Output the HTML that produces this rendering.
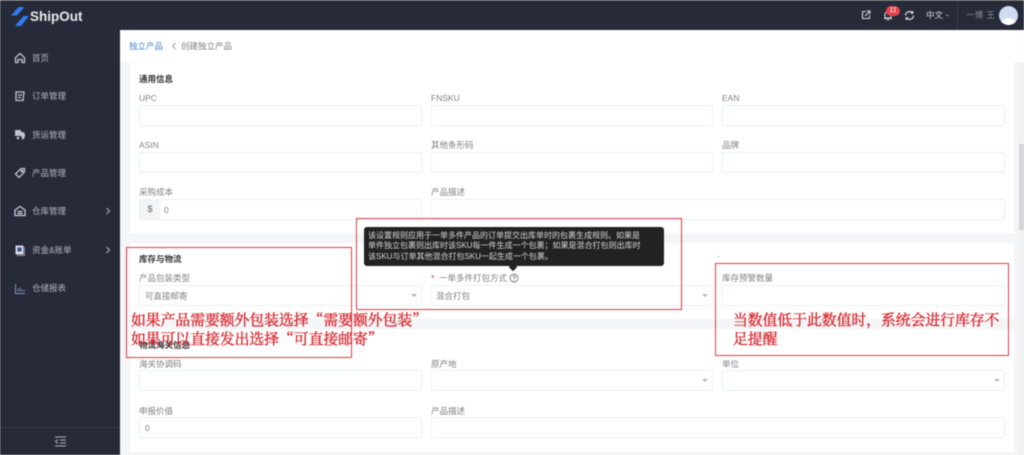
<!DOCTYPE html>
<html lang="zh"><head><meta charset="utf-8">
<style>
html,body{margin:0;padding:0}
body{width:1024px;height:455px;overflow:hidden;position:relative;background:#f4f5f6;font-family:"Liberation Sans","Noto Sans CJK SC",sans-serif;color:#777}
#w{position:absolute;left:0;top:0;width:1024px;height:455px;overflow:hidden;filter:blur(.45px)}
.a{position:absolute}
.t{position:absolute;white-space:nowrap;line-height:12px;font-size:8.5px;color:#808080}
.h{position:absolute;white-space:nowrap;line-height:12px;font-size:8.5px;color:#333;font-weight:700}
.i{position:absolute;background:#fff;border:1px solid #eceef0;border-radius:2px;box-sizing:border-box;height:21px}
.c{position:absolute;width:0;height:0;border-left:3px solid transparent;border-right:3px solid transparent;border-top:3px solid #b5b5b5}
.m{position:absolute;left:32px;white-space:nowrap;font-size:8.5px;line-height:12px;color:#b4b7bf}
.r{position:absolute;border:1.3px solid #dd3c44;box-sizing:border-box}
.n{position:absolute;font-family:"Noto Serif CJK SC","Liberation Serif",serif;color:#d7232b;-webkit-text-stroke:.35px #d7232b;font-size:14.8px;line-height:19px;white-space:nowrap}
svg{position:absolute;overflow:visible}
</style></head><body><div id="w">
<div class="a" style="left:120px;top:30px;width:904px;height:32px;background:#fff"></div>
<div class="a" style="left:130px;top:62px;width:884px;height:171px;background:#fff"></div>
<div class="a" style="left:130px;top:243px;width:884px;height:76px;background:#fff"></div>
<div class="a" style="left:130px;top:329px;width:884px;height:123px;background:#fff"></div>
<div class="a" style="left:1019px;top:62px;width:5px;height:393px;background:#f1f1f1"></div>
<div class="a" style="left:1019px;top:144px;width:5px;height:86px;background:#d5d5d5"></div>

<div class="a" style="left:0;top:0;width:1024px;height:30px;background:#272a38"></div>
<div class="a" style="left:0;top:0;width:1024px;height:1px;background:#555"></div>
<div class="a" style="left:0;top:30px;width:120px;height:425px;background:#272a38"></div>
<div class="a" style="left:0;top:427px;width:120px;height:1px;background:#3a3d4b"></div>

<svg style="left:10px;top:6px" width="20" height="22" viewBox="0 0 20 22"><path d="M8.500 1h6L7 9.500H1z M13.500 10H19l-8 10H5z" fill="#2f7cf0"/></svg>
<div class="a" style="left:30px;top:9px;font-size:13.500px;line-height:16px;font-weight:700;color:#e8e9ec;white-space:nowrap">ShipOut</div>

<svg style="left:14px;top:52px" width="12" height="12" viewBox="0 0 12 12" fill="none" stroke="#bcc3d2" stroke-width="1.300"><path d="M1.500 5.500 6 1.500l4.500 4v5H8V7.500H4v3H1.500z"/></svg>
<svg style="left:14px;top:90px" width="12" height="12" viewBox="0 0 12 12" fill="none" stroke="#bcc3d2" stroke-width="1.300"><path d="M2 2h8l-1 8.500H2zM4 5h4M4 7.500h3"/></svg>
<svg style="left:14px;top:128px" width="12" height="12" viewBox="0 0 12 12"><path d="M1 2h6v6H1zM7 4h2.500L11 6v3H7z" fill="#bcc3d2"/><circle cx="4" cy="10" r="1.300" fill="#bcc3d2"/><circle cx="9" cy="10" r="1.300" fill="#bcc3d2"/></svg>
<svg style="left:14px;top:167px" width="12" height="12" viewBox="0 0 12 12" fill="none" stroke="#bcc3d2" stroke-width="1.300"><path d="M1.500 7 7 1.500h3.500V5L5 10.500z"/><circle cx="8" cy="4" r=".8"/></svg>
<svg style="left:14px;top:205px" width="12" height="12" viewBox="0 0 12 12" fill="none" stroke="#c4cbe0" stroke-width="1.300"><path d="M1 5 6 1.500 11 5v5.500H1zM3.500 6.500h5M3.500 8.500h5"/></svg>
<svg style="left:14px;top:244px" width="12" height="12" viewBox="0 0 12 12"><path d="M1.500 1.500h8v9h-8z" fill="#d5d8e0"/><path d="M3.500 3.500h4v4h-4z" fill="#34508c"/><path d="M10.500 3v8.500H3" fill="none" stroke="#8b8e99"/></svg>
<svg style="left:14px;top:283px" width="12" height="12" viewBox="0 0 12 12" fill="none" stroke="#7f94c4" stroke-width="1"><path d="M1.500 1v9.500H11M4 8.500V6M6 8.500V4.500M8 8.500V6.500M10 8.500V7"/></svg>

<div class="m" style="top:52px">首页</div>
<div class="m" style="top:90px">订单管理</div>
<div class="m" style="top:129px">货运管理</div>
<div class="m" style="top:167px">产品管理</div>
<div class="m" style="top:205px">仓库管理</div>
<div class="m" style="top:244px">资金&amp;账单</div>
<div class="m" style="top:282px">仓储报表</div>
<svg style="left:105px;top:207px" width="6" height="8" viewBox="0 0 6 8" fill="none" stroke="#aab" stroke-width="1.100"><path d="M1.500 1l3 3-3 3"/></svg>
<svg style="left:105px;top:246px" width="6" height="8" viewBox="0 0 6 8" fill="none" stroke="#aab" stroke-width="1.100"><path d="M1.500 1l3 3-3 3"/></svg>
<svg style="left:54px;top:436px" width="12" height="11" viewBox="0 0 12 11" fill="none" stroke="#aeb1ba" stroke-width="1"><path d="M1 1h11M6 4h6M6 7h6M1 10h11M4 3.500 1.500 5.500 4 7.500"/></svg>

<svg style="left:861px;top:10px" width="10" height="10" viewBox="0 0 10 10" fill="none" stroke="#d8d9de" stroke-width="1.100"><path d="M5 1.500H1.500v7h7V5M4 6l4.500-4.500M6 1h3v3"/></svg>
<svg style="left:883px;top:10px" width="10" height="11" viewBox="0 0 10 11" fill="none" stroke="#d8d9de" stroke-width="1.100"><path d="M2 8V4.500a3 3 0 0 1 6 0V8zM1 8.500h8M4 10h2"/></svg>
<div class="a" style="left:886px;top:6px;width:14px;height:10px;border-radius:5px;background:#e5444b;color:#fff;font-size:7px;line-height:10px;text-align:center">11</div>
<svg style="left:904px;top:10px" width="11" height="11" viewBox="0 0 11 11" fill="none" stroke="#d8d9de" stroke-width="1.200"><path d="M1.500 5.500a4 4 0 0 1 7-2.600M9.500 5.500a4 4 0 0 1-7 2.600M8.800 1v2.200H6.600M2.200 10V7.800h2.200"/></svg>
<div class="a" style="left:926px;top:9px;font-size:8.500px;line-height:12px;color:#d8d9de;white-space:nowrap">中文</div>
<div class="a" style="left:946px;top:15px;width:3px;height:1px;background:#888"></div>
<div class="a" style="left:957px;top:0;width:1px;height:30px;background:#3a3d4b"></div>
<div class="a" style="left:966px;top:9px;font-size:8.500px;line-height:12px;color:#8d909b;white-space:nowrap;letter-spacing:.3px">一博 王</div>
<div class="a" style="left:999px;top:6px;width:19px;height:19px;border-radius:50%;background:#cfdcf3;overflow:hidden"><div class="a" style="left:2px;top:12px;width:15px;height:12px;border-radius:50%;background:#fff"></div></div>

<div class="a" style="left:129px;top:40px;font-size:8.500px;line-height:12px;color:#4a86c5;white-space:nowrap">独立产品</div>
<svg style="left:171px;top:42px" width="6" height="8" viewBox="0 0 6 8" fill="none" stroke="#999" stroke-width=".9"><path d="M4.500 1l-3 3 3 3"/></svg>
<div class="a" style="left:181px;top:40px;font-size:8.500px;line-height:12px;color:#808080;white-space:nowrap">创建独立产品</div>

<div class="h" style="left:139px;top:73px">通用信息</div>
<div class="t" style="left:139px;top:92px">UPC</div><div class="i" style="left:139px;top:105px;width:283px"></div>
<div class="t" style="left:431px;top:92px">FNSKU</div><div class="i" style="left:431px;top:105px;width:282px"></div>
<div class="t" style="left:722px;top:92px">EAN</div><div class="i" style="left:722px;top:105px;width:283px"></div>
<div class="t" style="left:139px;top:139px">ASIN</div><div class="i" style="left:139px;top:152px;width:283px"></div>
<div class="t" style="left:431px;top:139px">其他条形码</div><div class="i" style="left:431px;top:152px;width:282px"></div>
<div class="t" style="left:722px;top:139px">品牌</div><div class="i" style="left:722px;top:152px;width:283px"></div>
<div class="t" style="left:139px;top:186px">采购成本</div><div class="i" style="left:139px;top:199px;width:283px"></div>
<div class="a" style="left:140px;top:200px;width:20px;height:19px;background:#f3f4f6;color:#666;font-size:9px;line-height:19px;text-align:center">$</div>
<div class="t" style="left:164px;top:204px">0</div>
<div class="t" style="left:431px;top:186px">产品描述</div><div class="i" style="left:431px;top:199px;width:574px"></div>

<div class="h" style="left:139px;top:253px">库存与物流</div>
<div class="t" style="left:139px;top:272px">产品包装类型</div><div class="i" style="left:139px;top:285px;width:283px"></div>
<div class="t" style="left:145px;top:290px">可直接邮寄</div><div class="c" style="left:411px;top:294px"></div>
<div class="a" style="left:431px;top:272px;color:#d33;font-size:8.500px;line-height:12px">*</div>
<div class="t" style="left:439px;top:272px">一单多件打包方式</div>
<svg style="left:509px;top:273px" width="10" height="10" viewBox="0 0 10 10" fill="none" stroke="#666" stroke-width=".8"><circle cx="5" cy="5" r="4"/><path d="M3.700 4a1.300 1.300 0 1 1 1.900 1.200c-.4.200-.6.500-.6.900M5 7v.7"/></svg>
<div class="i" style="left:431px;top:285px;width:282px"></div>
<div class="t" style="left:436px;top:290px">混合打包</div><div class="c" style="left:702px;top:294px"></div>
<div class="t" style="left:722px;top:272px">库存预警数量</div><div class="i" style="left:722px;top:285px;width:283px"></div>
<div class="a" style="left:718px;top:256px;width:1px;height:1px;background:#888"></div>

<div class="h" style="left:139px;top:339px;">物流海关信息</div>
<div class="t" style="left:139px;top:358px">海关协调码</div><div class="i" style="left:139px;top:370px;width:283px"></div>
<div class="t" style="left:431px;top:358px">原产地</div><div class="i" style="left:431px;top:370px;width:282px"></div><div class="c" style="left:702px;top:379px"></div>
<div class="t" style="left:722px;top:358px">单位</div><div class="i" style="left:722px;top:370px;width:283px"></div><div class="c" style="left:994px;top:379px"></div>
<div class="t" style="left:139px;top:405px">申报价值</div><div class="i" style="left:139px;top:417px;width:283px"></div>
<div class="t" style="left:145px;top:422px">0</div>
<div class="t" style="left:431px;top:405px">产品描述</div><div class="i" style="left:431px;top:417px;width:574px"></div>

<div class="a" style="left:364px;top:227px;width:300px;height:39px;background:#222;border-radius:3px"></div>
<div class="a" style="left:510px;top:264px;width:6px;height:6px;background:#222;transform:rotate(45deg)"></div>
<div class="a" style="left:368px;top:231px;font-size:8px;line-height:10.300px;color:#d8d8d8;white-space:nowrap">该设置规则应用于一单多件产品的订单提交出库单时的包裹生成规则。如果是<br>单件独立包裹则出库时该SKU每一件生成一个包裹；如果是混合打包则出库时<br>该SKU与订单其他混合打包SKU一起生成一个包裹。</div>

<div class="r" style="left:126px;top:247px;width:226px;height:111px"></div>
<div class="r" style="left:356px;top:218px;width:326px;height:92px"></div>
<div class="r" style="left:715px;top:263px;width:294px;height:93px"></div>
<div class="n" style="left:131px;top:310px">如果产品需要额外包装选择“需要额外包装”</div>
<div class="n" style="left:131px;top:329px">如果可以直接发出选择“可直接邮寄”</div>
<div class="n" style="left:733px;top:310px">当数值低于此数值时，系统会进行库存不</div>
<div class="n" style="left:733px;top:329px">足提醒</div>
</div></body></html>
